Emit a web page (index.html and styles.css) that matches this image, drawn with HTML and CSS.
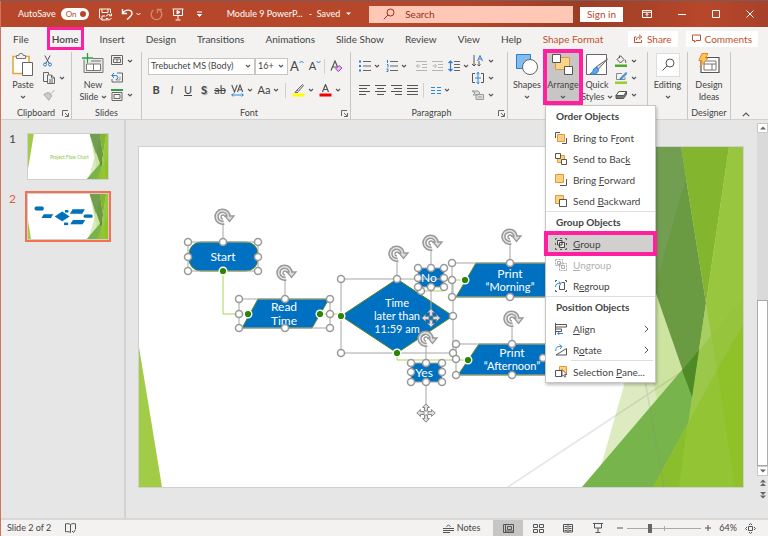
FILE: index.html
```html
<!doctype html>
<html lang="en">
<head>
    <meta charset="utf-8">
    <title>Module 9 PowerPoint</title>
    <meta name="viewport" content="width=device-width, initial-scale=1.0">
    <link rel="stylesheet" href="styles.css">
</head>
<body>

    <!-- shared symbols -->
    <svg class="sprite" aria-hidden="true">
        <symbol id="chev" viewBox="0 0 6 4"><path d="M1 1l2 2 2-2" fill="none" stroke="#555" stroke-width="1.1"/></symbol>
        <symbol id="launcher" viewBox="0 0 7 7"><path d="M.5 6V.5H6M3 3l3 3M6.500 3v3.500H3" fill="none" stroke="#666"/></symbol>
        <symbol id="art" viewBox="0 0 604 340">
            <rect width="604" height="340" fill="#fff"/>
            <path d="M456 340L553 0h51v340z" fill="#ddecc0"/>
            <path d="M466 0h138v340h-68z" fill="#cce4a0"/>
            <path d="M466 0h76l25 156-14 94z" fill="#6a9a42"/>
            <path d="M466 0h76l5 31-34 119z" fill="#729e52"/>
            <path d="M542 0h48l-23 156z" fill="#84b52f"/>
            <path d="M590 0h14v340h-64z" fill="#98c63f"/>
            <path d="M567 156l30 184h-57z" fill="#a6ce62"/>
            <path d="M443 340l117-137-20 137z" fill="#78b44c"/>
            <path d="M560 203l44-52v189h-64z" fill="#94c43c" opacity=".6"/>
            <path d="M543 223l17-20-7 47z" fill="#4e8a26"/>
            <path d="M514 340l64-117 26-45v162z" fill="#93c433"/>
            <path d="M514 340l34-60-8 60z" fill="#8bbe2c"/>
            <path d="M578 223l26-45v162h-8z" fill="#8fc129"/>
            <path d="M369 340l172-114M500 200l25 140" fill="none" stroke="#888" stroke-opacity=".22" stroke-width="1.500"/>
        </symbol>
        <symbol id="flow" viewBox="0 0 604 340">
            <g fill="none" stroke="#a9d65a">
                <path d="M84 124v43h25M181 167h21M282 144h22M305 133h21M258 206v7h71"/>
                <path d="M418 133h36v22M410 213h44v-33"/>
            </g>
            <g fill="#0070c0" stroke="#5b8a1e">
                <rect x="50" y="95" width="69" height="29" rx="12"/>
                <path d="M119 152h71l-17 29h-70z"/>
                <path d="M258 132l56 37-56 37-56-37z"/>
                <path d="M337 116h92l-20 34h-92z"/>
                <path d="M340 197h92l-20 31h-93z"/>
                <rect x="279" y="121" width="26" height="19" stroke="none"/>
                <rect x="272" y="216" width="31" height="19" stroke="none"/>
                <rect x="420" y="155" width="68" height="25" rx="12"/>
            </g>
        </symbol>
        <g id="h"><circle cx="5" cy="5" r="3.500" fill="#fff" stroke="#999" stroke-width="1.500"/></g>
        <g id="dot"><circle cx="5" cy="5" r="3.800" fill="#2a8500" stroke="#fff" stroke-width="1.400"/></g>
        <g id="rot">
            <path d="M14.500 9A6 6 0 1 0 10 14.500" fill="none" stroke="#999" stroke-width="4.500"/>
            <path d="M11 8h9l-4.500 5.500z" fill="#ddd" stroke="#999" stroke-width="1.300"/>
            <path d="M14.500 9A6 6 0 1 0 10 14.500" fill="none" stroke="#e4e4e4" stroke-width="1.500"/>
            <path d="M11 9a2 2 0 1 0-2 2" fill="none" stroke="#999" stroke-width="1.300"/>
        </g>
        <g id="move" fill="#ddd" stroke="#888">
            <path d="M10 .8l3.500 3.700h-2V8h-3V4.500h-2z"/>
            <path d="M10 19.200l3.500-3.700h-2V12h-3v3.500h-2z"/>
            <path d="M.8 10l3.700-3.500v2H8v3H4.500v2z"/>
            <path d="M19.200 10l-3.700-3.500v2H12v3h3.500v2z"/>
        </g>
    </svg>

    <div class="backdrop"></div>
    <div class="app">
        <header class="titlebar">
            <label class="autosave" for="autosave">AutoSave</label>
            <span class="toggle"><input type="checkbox" id="autosave" checked><span class="toggle-text">On</span><span class="knob"></span></span>
            <div class="quick">
                <button aria-label="Save"><svg width="13" height="13" viewBox="0 0 13 13"><path d="M6 12H3L.5 10V1h11v4M3 1v3.500h6V1M3 12V8h3M7 8.500a3 3 0 0 1 5-1M12.500 5.500v2.300h-2.300M12.300 10a3 3 0 0 1-5 1M7 12.800v-2.300h2.300"/></svg></button>
                <button aria-label="Undo"><svg width="20" height="13" viewBox="0 0 20 13"><path d="M1.500 1v4.500H6M1.500 5.500C4 1 11 1 11 5.500c0 2.500-3 4-5 6" stroke-width="1.400"/><path d="M15.500 5l2 2 2-2"/></svg></button>
                <button aria-label="Redo" class="faded"><svg width="13" height="13" viewBox="0 0 13 13"><path d="M3.500 2A5.300 5.300 0 1 0 9.500 2M7.500 5V1.500H12" stroke-width="1.400"/></svg></button>
                <button aria-label="Start slide show"><svg width="12" height="13" viewBox="0 0 12 13"><path d="M.5 1h11M1.500 1v6.500h9V1M6 7.500v4M3.500 12h5"/><path d="M5 2.500v3.500l3-1.800z" fill="#fff"/></svg></button>
                <button aria-label="Customize toolbar"><svg width="7" height="7" viewBox="0 0 7 7"><path d="M1 1h5"/><path d="M1.500 3.500h4l-2 2z" fill="#fff"/></svg></button>
            </div>
            <div class="doc"><span>Module 9 PowerP...</span><span>-&nbsp; Saved</span><svg width="5" height="4" viewBox="0 0 5 4"><path d="M0 .5h5L2.500 3z" fill="#fff"/></svg></div>
            <div class="search">
                <svg width="12" height="12" viewBox="0 0 12 12"><circle cx="7.500" cy="4.500" r="3.500" fill="none" stroke="#9b2f20"/><path d="M5 7L.8 11.200" stroke="#9b2f20"/></svg>
                <input type="search" placeholder="Search" aria-label="Search">
            </div>
            <button class="signin">Sign in</button>
            <div class="window-buttons">
                <button aria-label="Ribbon display options"><svg width="10" height="8" viewBox="0 0 10 8"><path d="M.5.500h9v7h-9zM.5 2.300h9M5 6.500V3.500M3.500 5L5 3.500 6.500 5"/></svg></button>
                <button aria-label="Minimize"><svg width="8" height="8" viewBox="0 0 8 8"><path d="M0 4.500h8"/></svg></button>
                <button aria-label="Maximize"><svg width="8" height="8" viewBox="0 0 8 8"><path d="M.5.500h7v7h-7z"/></svg></button>
                <button aria-label="Close"><svg width="8" height="8" viewBox="0 0 8 8"><path d="M.5.500l7 7M7.500.500l-7 7"/></svg></button>
            </div>
        </header>

        <nav class="tabs">
            <a href="#">File</a>
            <a href="#" class="active">Home</a>
            <a href="#">Insert</a>
            <a href="#">Design</a>
            <a href="#">Transitions</a>
            <a href="#">Animations</a>
            <a href="#">Slide Show</a>
            <a href="#">Review</a>
            <a href="#">View</a>
            <a href="#">Help</a>
            <a href="#" class="context">Shape Format</a>
            <div class="tab-actions">
                <button><svg width="9" height="9" viewBox="0 0 9 9"><path d="M2.500 3H.5v5.500h7V6M2.500 6c0-2.500 2-3 3.500-3M5 .8L7.800 3 5 5.200"/></svg>Share</button>
                <button><svg width="9" height="9" viewBox="0 0 9 9"><path d="M.5 1h8v5.500H4L2.500 8.300V6.500h-2z"/></svg>Comments</button>
            </div>
        </nav>

        <section class="ribbon">
            <div class="group clipboard">
                <div class="tools">
                    <button class="big"><svg width="22" height="24" viewBox="0 0 22 24"><path d="M1 3.500h16v17H1z" fill="#fff" stroke="#e8a33d" stroke-width="1.500"/><path d="M4.500 5.500v-3h2.300a2.200 2.200 0 0 1 4.400 0h2.300v3z" fill="#f3f2f1" stroke="#777"/><path d="M10.500 9.500h10v13h-10z" fill="#fff" stroke="#666"/></svg><span>Paste</span><svg class="c"><use href="#chev"/></svg></button>
                    <div class="stack">
                        <button aria-label="Cut"><svg width="9" height="12" viewBox="0 0 9 12"><path d="M1.800.500l4.400 8M7.200.500l-4.400 8" stroke="#555" fill="none"/><g fill="none" stroke="#2b7cd3"><circle cx="2" cy="9.500" r="1.500"/><circle cx="7" cy="9.500" r="1.500"/></g></svg></button>
                        <button aria-label="Copy"><svg width="12" height="12" viewBox="0 0 12 12"><path d="M4 9.500H.5v-9h5v2M4.500 3h4l3 3v5.500h-7zM8.500 3v3h3M6 8h4M6 10h4" fill="none" stroke="#666"/></svg><svg class="c"><use href="#chev"/></svg></button>
                        <button aria-label="Format painter"><svg width="12" height="12" viewBox="0 0 12 12"><path d="M11.500 1L8 4.500M5.500 3L9 6.500M5 3.500L.8 5.500l5 5.800L8.500 7z" fill="#ccc" stroke="#aaa"/></svg></button>
                    </div>
                </div>
                <div class="caption">Clipboard<svg class="launch"><use href="#launcher"/></svg></div>
            </div>

            <div class="group slides">
                <div class="tools">
                    <button class="big"><svg width="22" height="24" viewBox="0 0 22 24"><path d="M2 5.500h19v14H2z" fill="#e6e6e6" stroke="#777"/><path d="M4.500 11h14v6.500h-14zM11.500 11v6.500M9 8h10" fill="#fff" stroke="#777"/><path d="M5.500 0v10.500M0 5h11" stroke="#f3f2f1" stroke-width="3"/><path d="M5.500 0v10.500M0 5h11" stroke="#2f9e44" stroke-width="1.300"/></svg><span>New</span><span>Slide <svg class="c"><use href="#chev"/></svg></span></button>
                    <div class="stack">
                        <button aria-label="Layout"><svg width="12" height="11" viewBox="0 0 12 11"><path d="M.5.500h11v9H.5zM2.500 4h7v3.500h-7zM6 4v3.500M2.500 2.500h7" fill="none" stroke="#666"/></svg><svg class="c"><use href="#chev"/></svg></button>
                        <button aria-label="Reset"><svg width="12" height="11" viewBox="0 0 12 11"><path d="M6 1h5.500v9H1V7" fill="none" stroke="#666"/><path d="M5 8h4V4.500" fill="none" stroke="#999"/><path d="M.8 3.500h4a2 2 0 0 1 0 4M3 1L.8 3.500 3 6" fill="none" stroke="#2b7cd3"/></svg></button>
                        <button aria-label="Section"><svg width="12" height="12" viewBox="0 0 12 12"><path d="M0 1h12" stroke="#2f9e44" stroke-width="2"/><path d="M1 3.500h10v8H1zM3 5.500h6v4H3z" fill="none" stroke="#666"/></svg><svg class="c"><use href="#chev"/></svg></button>
                    </div>
                </div>
                <div class="caption">Slides</div>
            </div>

            <div class="group font">
                <div class="rows">
                    <div class="row">
                        <label class="combo name"><select aria-label="Font"><option>Trebuchet MS (Body)</option></select><svg class="c"><use href="#chev"/></svg></label>
                        <label class="combo size"><select aria-label="Font size"><option>16+</option></select><svg class="c"><use href="#chev"/></svg></label>
                        <button class="mid" aria-label="Increase font size"><span class="glyph">A</span><svg class="sup" width="5" height="4" viewBox="0 0 5 4"><path d="M.5 3l2-2 2 2"/></svg></button>
                        <button class="mid" aria-label="Decrease font size"><span class="glyph less">A</span><svg class="sup" width="5" height="4" viewBox="0 0 5 4"><path d="M.5 1l2 2 2-2"/></svg></button>
                        <i class="sep"></i>
                        <button class="mid clear" aria-label="Clear formatting"><svg width="13" height="12" viewBox="0 0 13 12"><path d="M1 10.500L5 1l3 7M2.500 7H7" fill="none" stroke="#555" stroke-width="1.200"/><path d="M5.500 9L9 5.500l3 2.500-3.500 3.500z" fill="#e3b8ee" stroke="#a347ba"/></svg></button>
                    </div>
                    <div class="row">
                        <button><b>B</b></button>
                        <button><em>I</em></button>
                        <button><u>U</u></button>
                        <button class="shadow"><b>S</b></button>
                        <button><s>ab</s></button>
                        <button class="dd" aria-label="Character spacing"><svg width="13" height="13" viewBox="0 0 13 13"><path d="M.8 1l2.700 7L6.200 1M6.500 8L9 1l2.700 7M7.300 5.800h3.500" fill="none" stroke="#555" stroke-width="1.100"/><path d="M.5 11h12M2.500 9.300L.8 11l1.700 1.700M10.500 9.300l1.700 1.700-1.700 1.700" fill="none" stroke="#2b88d8"/></svg><svg class="c"><use href="#chev"/></svg></button>
                        <button class="dd">Aa<svg class="c"><use href="#chev"/></svg></button>
                        <i class="sep"></i>
                        <button class="dd" aria-label="Highlight colour"><svg width="13" height="13" viewBox="0 0 13 13"><path d="M10.500.500L5 6l1.500 1.500 5-6zM5 6L3 8.500h3" fill="#ddd" stroke="#666"/><path d="M.5 9.500h12v3H.5z" fill="#ffff00"/></svg><svg class="c"><use href="#chev"/></svg></button>
                        <button class="dd" aria-label="Font colour"><svg width="13" height="13" viewBox="0 0 13 13"><path d="M3.500 8l3-7.500 3 7.500M4.500 5.500h4" fill="none" stroke="#555" stroke-width="1.200"/><path d="M.5 9.500h12v3H.5z" fill="#f00000"/></svg><svg class="c"><use href="#chev"/></svg></button>
                    </div>
                </div>
                <div class="caption">Font<svg class="launch"><use href="#launcher"/></svg></div>
            </div>

            <div class="group paragraph">
                <div class="tools">
                    <div class="rows">
                        <div class="row">
                            <button class="dd" aria-label="Bullets"><svg width="12" height="12" viewBox="0 0 12 12"><path d="M0 1.500h2M0 6h2M0 10.500h2" stroke="#2b7cd3" stroke-width="2"/><path d="M4 1.500h8M4 6h8M4 10.500h8" stroke="#666"/></svg><svg class="c"><use href="#chev"/></svg></button>
                            <button class="dd" aria-label="Numbering"><svg width="12" height="12" viewBox="0 0 12 12"><path d="M1.500 0v3M1 4.500h1v3M.5 9h1.500v2.500H.5" stroke="#2b7cd3" fill="none"/><path d="M4 1.500h8M4 6h8M4 10.500h8" stroke="#666"/></svg><svg class="c"><use href="#chev"/></svg></button>
                            <i class="space"></i>
                            <button aria-label="Decrease indent"><svg width="11" height="10" viewBox="0 0 11 10"><path d="M0 .500h11M6 3.500h5M6 6.500h5M0 9.500h11M.5 5h4M2.500 3l-2 2 2 2" fill="none" stroke="#b5b5b5"/></svg></button>
                            <button aria-label="Increase indent"><svg width="11" height="10" viewBox="0 0 11 10"><path d="M0 .500h11M6 3.500h5M6 6.500h5M0 9.500h11M.5 5h4M2.500 3l2 2-2 2" fill="none" stroke="#b5b5b5"/></svg></button>
                            <button class="dd" aria-label="Line spacing"><svg width="12" height="12" viewBox="0 0 12 12"><path d="M2.500 1v10M.5 3l2-2 2 2M.5 9l2 2 2-2" stroke="#2b7cd3" fill="none" stroke-width="1.200"/><path d="M6 1.500h6M6 4.500h6M6 7.500h6M6 10.500h6" stroke="#666"/></svg><svg class="c"><use href="#chev"/></svg></button>
                        </div>
                        <div class="row">
                            <button aria-label="Align left"><svg width="11" height="10" viewBox="0 0 11 10"><path d="M0 .500h11M0 3.500h8M0 6.500h11M0 9.500h7" stroke="#555"/></svg></button>
                            <button aria-label="Center"><svg width="11" height="10" viewBox="0 0 11 10"><path d="M0 .500h11M2 3.500h7M0 6.500h11M2 9.500h7" stroke="#555"/></svg></button>
                            <button aria-label="Align right"><svg width="11" height="10" viewBox="0 0 11 10"><path d="M0 .500h11M3 3.500h8M0 6.500h11M4 9.500h7" stroke="#555"/></svg></button>
                            <button aria-label="Justify"><svg width="11" height="10" viewBox="0 0 11 10"><path d="M0 .500h11M0 3.500h11M0 6.500h11M0 9.500h11" stroke="#555"/></svg></button>
                            <i class="sep"></i>
                            <button class="dd" aria-label="Columns"><svg width="10" height="7" viewBox="0 0 10 7"><path d="M0 .500h4M0 3.500h4M0 6.500h4M6 .500h4M6 3.500h4M6 6.500h4" stroke="#2b88d8"/></svg><svg class="c"><use href="#chev"/></svg></button>
                        </div>
                    </div>
                    <div class="stack">
                        <button aria-label="Text direction"><svg width="12" height="12" viewBox="0 0 12 12"><path d="M2 0v11M0 9l2 2 2-2M7 6v5M5.500 9.500L7 11l1.500-1.500" fill="none" stroke="#555"/><path d="M5.500 6l2.500-5.500L10.500 6M6.500 4h3" fill="none" stroke="#2b7cd3"/></svg><svg class="c"><use href="#chev"/></svg></button>
                        <button aria-label="Align text"><svg width="12" height="12" viewBox="0 0 12 12"><path d="M3 1.500H.5v9H3M9 1.500h2.500v9H9" fill="none" stroke="#555"/><path d="M6 0v12M4.500 1.800L6 .5l1.500 1.300M4.500 10.200L6 11.500l1.500-1.300M3 6h6" fill="none" stroke="#2b88d8"/></svg><svg class="c"><use href="#chev"/></svg></button>
                        <button aria-label="Convert to SmartArt"><svg width="12" height="12" viewBox="0 0 12 12"><path d="M0 2h6l2 2-2 2H1l2-2zM4 5.500h7.500v5H4zM6 8h4" fill="#ddd" stroke="#999"/></svg><svg class="c"><use href="#chev"/></svg></button>
                    </div>
                </div>
                <div class="caption">Paragraph<svg class="launch"><use href="#launcher"/></svg></div>
            </div>

            <div class="group drawing">
                <div class="tools">
                    <button class="big"><svg width="22" height="24" viewBox="0 0 22 24"><path d="M.5 1.500h14v14H.5z" fill="#83bdf0" stroke="#2b7cd3"/><circle cx="14" cy="14" r="7.500" fill="#fff" stroke="#666"/></svg><span>Shapes</span><svg class="c"><use href="#chev"/></svg></button>
                    <div class="arrange">
                        <button class="big" aria-expanded="true"><svg width="22" height="24" viewBox="0 0 22 24"><path d="M3.500 4.500h14v12h-14z" fill="#f8d58a" stroke="#e8943a"/><path d="M.5 1.500h8v8h-8zM12.500 13.500h8v8h-8z" fill="#fff" stroke="#555"/></svg><span>Arrange</span><svg class="c"><use href="#chev"/></svg></button>
                        <div class="menu" role="menu">
                            <h3>Order Objects</h3>
                            <button role="menuitem"><svg width="12" height="12" viewBox="0 0 12 12"><path d="M.5 6V.5H5M11.500 6v5.500H7" fill="none" stroke="#555"/><path d="M2.500 2.500h7v7h-7z" fill="#fbd37c" stroke="#e8943a"/></svg><span>Bring to F<u>r</u>ont</span></button>
                            <button role="menuitem"><svg width="12" height="12" viewBox="0 0 12 12"><path d="M2.500 2.500h7v7h-7z" fill="#fbd37c" stroke="#e8943a"/><path d="M.5.500h5v5h-5zM6.500 6.500h5v5h-5z" fill="#fff" stroke="#555"/></svg><span>Send to Bac<u>k</u></span></button>
                            <button role="menuitem"><svg width="12" height="12" viewBox="0 0 12 12"><path d="M11.500 5v6.500H5" fill="none" stroke="#555"/><path d="M.5.500h8v8h-8z" fill="#fbd37c" stroke="#e8943a"/></svg><span>Bring <u>F</u>orward</span></button>
                            <button role="menuitem"><svg width="12" height="12" viewBox="0 0 12 12"><path d="M.5.500h8v8h-8z" fill="#fbd37c" stroke="#e8943a"/><path d="M4.500 4.500h7v7h-7z" fill="#fff" stroke="#555"/></svg><span>Send <u>B</u>ackward</span></button>
                            <h3 class="line">Group Objects</h3>
                            <button role="menuitem" class="hot"><svg width="12" height="12" viewBox="0 0 12 12"><path d="M.5 2V.5H2M10 .500h1.500V2M11.500 10v1.500H10M2 11.500H.5V10M5 .500h2M5 11.500h2M.5 5v2M11.500 5v2" fill="none" stroke="#555"/><path d="M2.500 2.500h4.500v4.500h-4.500zM4.500 4.500h5v5h-5z" fill="#fff" fill-opacity=".6" stroke="#444"/></svg><span><u>G</u>roup</span></button>
                            <button role="menuitem" disabled><svg width="12" height="12" viewBox="0 0 12 12"><path d="M.5.500h7v6h-7zM4.500 4.500h7v7h-7z" fill="none" stroke="#aaa" stroke-dasharray="2 1"/><path d="M2.500 2.500h3v3h-3zM6.500 6.500h3v3h-3z" fill="none" stroke="#aaa"/></svg><span><u>U</u>ngroup</span></button>
                            <button role="menuitem"><svg width="12" height="12" viewBox="0 0 12 12"><path d="M.5 2V.5H2M10 .500h1.500V2M11.500 10v1.500H10M2 11.500H.5V10" fill="none" stroke="#555"/><path d="M6.500 2.500h3v7h-5V6" fill="none" stroke="#555"/><path d="M.5 7c0-3 2-4 5-3.500M3.500 1.500L6 3.600 4 6" fill="none" stroke="#2b88d8"/></svg><span>R<u>e</u>group</span></button>
                            <h3 class="line">Position Objects</h3>
                            <button role="menuitem"><svg width="12" height="12" viewBox="0 0 12 12"><path d="M.5 0v12M.5 1.500h11v2.500H.5M.5 6h6v2.500h-6" fill="none" stroke="#555"/><path d="M2.500 10.500H8M4.500 9L2.800 10.500 4.500 12" fill="none" stroke="#2b88d8"/></svg><span><u>A</u>lign</span><svg class="more" width="5" height="8" viewBox="0 0 5 8"><path d="M.8.800L4 4 .8 7.200"/></svg></button>
                            <button role="menuitem"><svg width="12" height="12" viewBox="0 0 12 12"><path d="M11.500 4.500v6.500H1z" fill="none" stroke="#555"/><path d="M.8 7C.5 3 3 2 6 2.500M4.500.500L7 2.600 5 5" fill="none" stroke="#2b88d8"/></svg><span>R<u>o</u>tate</span><svg class="more" width="5" height="8" viewBox="0 0 5 8"><path d="M.8.800L4 4 .8 7.200"/></svg></button>
                            <hr>
                            <button role="menuitem"><svg width="12" height="12" viewBox="0 0 12 12"><path d="M4.500.500h7v7h-7z" fill="#fbd37c" stroke="#e8943a"/><path d="M.5 4.500h6v6h-6z" fill="#fff" stroke="#555"/><path d="M7 3.500v7l1.600-1.600 1.200 2.300 1-.6-1.100-2.100H12z" fill="#fff" stroke="#444" stroke-width=".8"/></svg><span>Selection <u>P</u>ane...</span></button>
                        </div>
                    </div>
                    <button class="big styles"><svg width="22" height="24" viewBox="0 0 22 24"><path d="M.5 1.500h20v20H.5z" fill="#fff" stroke="#666"/><path d="M21.500 6l-9 10-2.500-2z" fill="#ddd" stroke="#666"/><path d="M11 14.500c-3 0-4 2-4 4L4 21c4 .800 8 0 8.500-4z" fill="#5aa9e6" stroke="#2b7cd3"/></svg><span>Quick</span><span>Styles <svg class="c"><use href="#chev"/></svg></span></button>
                    <div class="stack">
                        <button aria-label="Shape fill"><svg width="12" height="12" viewBox="0 0 12 12"><path d="M5.500.800L9 4.500 5.500 8 2 4.500zM4.500 3V.500M10 5c1 1.500 1 2.500.3 3" fill="none" stroke="#555"/><path d="M0 9.500h12V12H0z" fill="#4ea72e"/></svg><svg class="c"><use href="#chev"/></svg></button>
                        <button aria-label="Shape outline"><svg width="12" height="12" viewBox="0 0 12 12"><path d="M7 1.500H1.500v6H10V5" fill="none" stroke="#888"/><path d="M11 .500L5.500 6 5 7.500l1.500-.5L12 1.500z" fill="#5aa9e6" stroke="#2b7cd3"/><path d="M0 9.500h12V12H0z" fill="#9acd32"/></svg><svg class="c"><use href="#chev"/></svg></button>
                        <button aria-label="Shape effects"><svg width="12" height="12" viewBox="0 0 12 12"><path d="M4 2.500h7.500v3l-3 4H1v-3z" fill="#777" stroke="#555"/><path d="M4 2.500h7.500l-3 4H1z" fill="#fff" stroke="#555"/></svg><svg class="c"><use href="#chev"/></svg></button>
                    </div>
                </div>
            </div>

            <div class="group editing">
                <div class="tools">
                    <button class="big"><svg class="tile" width="22" height="22" viewBox="0 0 22 22"><circle cx="13" cy="9" r="4" fill="none" stroke="#555"/><path d="M10 12l-4.500 4.500" stroke="#555"/></svg><span>Editing</span><svg class="c"><use href="#chev"/></svg></button>
                </div>
            </div>

            <div class="group designer">
                <div class="tools">
                    <button class="big"><svg width="22" height="24" viewBox="0 0 22 24"><path d="M3 4.500h18v15H3z" fill="#fff" stroke="#555" stroke-width="1.200"/><path d="M6 8h12v9H6zM6 11h12M14 11v6" fill="none" stroke="#777"/><path d="M4 .500h6L7.500 5H10L2 14l2-6.500H.8z" fill="#fbc55a" stroke="#e8852a"/></svg><span>Design</span><span>Ideas</span></button>
                </div>
                <div class="caption">Designer</div>
            </div>
            <button class="collapse" aria-label="Collapse ribbon"><svg width="8" height="5" viewBox="0 0 8 5"><path d="M.8 4.200L4 1l3.200 3.200" fill="none" stroke="#555" stroke-width="1.200"/></svg></button>
        </section>

        <main class="workspace">
            <aside class="thumbs">
                <figure>
                    <figcaption>1</figcaption>
                    <svg class="thumb" viewBox="0 0 604 340"><use href="#art"/><path d="M0 0h44L0 265z" fill="#a2cc46"/><text class="deck-title" x="312" y="188">Project Flow Chart</text></svg>
                </figure>
                <figure class="selected">
                    <figcaption>2</figcaption>
                    <svg class="thumb" viewBox="0 0 604 340"><use href="#art"/><path d="M0 200l23 140H0z" fill="#a2cc46"/><use href="#flow"/></svg>
                </figure>
            </aside>

            <div class="editor">
                <svg class="slide" viewBox="0 0 604 340" role="img" aria-label="Flow chart slide">
                    <use href="#art"/>
                    <path d="M0 200l23 140H0z" fill="#a2cc46"/>
                    <use href="#flow"/>

                    <!-- selection frames and stems -->
                    <g fill="none" stroke="#a6a6a6">
                        <path d="M49 95h70v29H49zM84 95V77"/>
                        <path d="M100 152h91v29h-91zM146 152v-18"/>
                        <path d="M202 132h112v74H202zM258 132v-18"/>
                        <path d="M279 121h26v19h-26zM292 121v-18M292 140v24"/>
                        <path d="M313 116h116v34H313zM371 116V98"/>
                        <path d="M317 197h112v31H317zM373 197v-18"/>
                        <path d="M272 216h31v19h-31zM287 216v-17M287 235v24"/>
                    </g>

                    <g class="shape-text">
                        <text x="84" y="114">Start</text>
                        <text x="145" y="164">Read</text>
                        <text x="145" y="178">Time</text>
                        <text x="371" y="131">Print</text>
                        <text x="373" y="210">Print</text>
                        <text x="290" y="135">No</text>
                        <text x="285" y="230">Yes</text>
                    </g>
                    <g class="shape-text small">
                        <text x="258" y="160">Time</text>
                        <text x="258" y="173">later than</text>
                        <text x="258" y="186">11:59 am</text>
                        <text x="371" y="144">“Morning”</text>
                        <text x="373" y="223">“Afternoon”</text>
                    </g>

                    <!-- resize handles -->
                    <g>
                        <use href="#h" x="44" y="90"/><use href="#h" x="79" y="90"/><use href="#h" x="114" y="90"/>
                        <use href="#h" x="44" y="105"/><use href="#h" x="114" y="105"/>
                        <use href="#h" x="44" y="119"/><use href="#h" x="114" y="119"/>
                        <use href="#h" x="95" y="147"/><use href="#h" x="141" y="147"/><use href="#h" x="186" y="147"/>
                        <use href="#h" x="95" y="162"/><use href="#h" x="186" y="162"/>
                        <use href="#h" x="95" y="176"/><use href="#h" x="141" y="176"/><use href="#h" x="186" y="176"/>
                        <use href="#h" x="197" y="127"/><use href="#h" x="253" y="127"/><use href="#h" x="309" y="164"/>
                        <use href="#h" x="197" y="201"/><use href="#h" x="309" y="201"/>
                        <use href="#h" x="277" y="139"/>
                        <use href="#h" x="274" y="116"/><use href="#h" x="287" y="116"/><use href="#h" x="300" y="116"/>
                        <use href="#h" x="274" y="126"/><use href="#h" x="300" y="126"/>
                        <use href="#h" x="274" y="135"/><use href="#h" x="287" y="135"/><use href="#h" x="300" y="135"/>
                        <use href="#h" x="308" y="111"/><use href="#h" x="366" y="111"/>
                        <use href="#h" x="308" y="128"/><use href="#h" x="308" y="145"/><use href="#h" x="366" y="145"/>
                        <use href="#h" x="312" y="192"/><use href="#h" x="368" y="192"/>
                        <use href="#h" x="312" y="207"/><use href="#h" x="312" y="223"/><use href="#h" x="368" y="223"/>
                        <use href="#h" x="399" y="206"/>
                        <use href="#h" x="267" y="211"/><use href="#h" x="282" y="211"/><use href="#h" x="298" y="211"/>
                        <use href="#h" x="267" y="220"/><use href="#h" x="298" y="220"/>
                        <use href="#h" x="267" y="230"/><use href="#h" x="282" y="230"/><use href="#h" x="298" y="230"/>
                    </g>
                    <!-- connection points -->
                    <g>
                        <use href="#dot" x="79" y="119"/><use href="#dot" x="104" y="162"/><use href="#dot" x="176" y="162"/>
                        <use href="#dot" x="197" y="164"/><use href="#dot" x="253" y="201"/>
                        <use href="#dot" x="321" y="128"/><use href="#dot" x="324" y="208"/>
                    </g>
                    <g>
                        <use href="#rot" x="75" y="61"/><use href="#rot" x="137" y="117"/><use href="#rot" x="249" y="98"/>
                        <use href="#rot" x="283" y="87"/><use href="#rot" x="362" y="81"/><use href="#rot" x="364" y="163"/>
                        <use href="#rot" x="278" y="183"/>
                    </g>
                    <g>
                        <use href="#move" x="282" y="161"/><use href="#move" x="277" y="256"/>
                    </g>
                </svg>
            </div>

            <div class="scrollbar">
                <button aria-label="Scroll up"><svg width="6" height="4" viewBox="0 0 6 4"><path d="M0 3.500h6L3 .500z"/></svg></button>
                <div class="track"><div class="grip"></div></div>
                <button aria-label="Scroll down"><svg width="6" height="4" viewBox="0 0 6 4"><path d="M0 .500h6L3 3.500z"/></svg></button>
                <button class="bare" aria-label="Previous slide"><svg width="6" height="7" viewBox="0 0 6 7"><path d="M0 3.500h6L3 .500zM0 7h6L3 4z"/></svg></button>
                <button class="bare" aria-label="Next slide"><svg width="6" height="7" viewBox="0 0 6 7"><path d="M0 0h6L3 3zM0 3.500h6L3 6.500z"/></svg></button>
            </div>
        </main>

        <footer class="status">
            <span>Slide 2 of 2</span>
            <svg class="book" width="11" height="10" viewBox="0 0 11 10"><path d="M5.500 1.500C4 .500 2 .500.5.800v8c1.500-.3 3.500-.3 5 .7V1.500C7 .500 9 .500 10.500.800V6M7 8l1.500 1.500L10.500 6.500"/></svg>
            <button class="notes"><svg width="11" height="9" viewBox="0 0 11 9"><path d="M0 4.500h11M0 6.500h11M0 8.500h7M3.500 2.800l2-2 2 2"/></svg>Notes</button>
            <div class="views">
                <button class="on" aria-label="Normal"><svg width="11" height="9" viewBox="0 0 11 9"><path d="M.5.500h10v8H.5zM2.500.500v8M4.500 2.500h4v3h-4zM2.500 7h8"/></svg></button>
                <button aria-label="Slide sorter"><svg width="11" height="9" viewBox="0 0 11 9"><path d="M.5.500h4v3h-4zM6.500.500h4v3h-4zM.5 5.500h4v3h-4zM6.500 5.500h4v3h-4z"/></svg></button>
                <button aria-label="Reading view"><svg width="10" height="9" viewBox="0 0 10 9"><path d="M.5.500h9v7.500h-9zM5 .500v8.500M1.500 2.500h2.500M1.500 4.500h2.500M1.500 6.500h2.500M6 2.500h2.500M6 4.500h2.500M6 6.500h2.500"/></svg></button>
                <button aria-label="Slide show"><svg width="10" height="10" viewBox="0 0 10 10"><path d="M0 .500h10M1.500.500v4.500h7V.500M5 5v4M2.500 9.500h5"/></svg></button>
            </div>
            <div class="zoom">
                <button aria-label="Zoom out"><svg width="6" height="6" viewBox="0 0 6 6"><path d="M0 3h6"/></svg></button>
                <input type="range" min="0" max="100" value="30" aria-label="Zoom">
                <button aria-label="Zoom in"><svg width="6" height="6" viewBox="0 0 6 6"><path d="M0 3h6M3 0v6"/></svg></button>
                <span>64%</span>
                <button aria-label="Fit slide"><svg width="11" height="11" viewBox="0 0 11 11"><path d="M3.500 3.500h4v4h-4zM4 2l1.500-1.500L7 2M4 9l1.500 1.500L7 9M2 4L.5 5.500 2 7M9 4l1.500 1.500L9 7"/></svg></button>
            </div>
        </footer>
    </div>

</body>
</html>
```
FILE: styles.css
```css
* {
    box-sizing: border-box;
}
body {
    margin: 0;
    height: 100vh;
    display: flex;
    flex-direction: column;
    font-family: "Segoe UI", Lato, "Open Sans", sans-serif;
    font-size: 10px;
    line-height: 12px;
    color: #444;
    background: #e6e6e6;
    overflow: hidden;
}
button, input, select {
    font: inherit;
    color: inherit;
}
button {
    display: inline-flex;
    align-items: center;
    justify-content: center;
    padding: 0;
    border: none;
    background: none;
    cursor: pointer;
    white-space: nowrap;
}
svg {
    flex: none;
}
.sprite {
    display: none;
}
.c {
    width: 6px;
    height: 4px;
}
.backdrop {
    height: 1px;
    background: #7b5b5b;
}
.app {
    flex: 1;
    min-height: 0;
    display: flex;
    flex-direction: column;
    border-left: 1px solid #d0735c;
}

/* title bar */
.titlebar {
    display: flex;
    align-items: center;
    height: 26px;
    padding: 0 14px 0 17px;
    color: #fff;
    background: linear-gradient(90deg, #b7472a 60%, #9c3d26 75%, #b7472a 92%, #a8412a);
}
.titlebar button svg {
    fill: none;
    stroke: #fff;
}
.autosave {
    font-size: 9px;
}
.toggle {
    position: relative;
    display: flex;
    align-items: center;
    justify-content: space-between;
    width: 28px;
    height: 12px;
    margin-left: 5px;
    padding: 0 3px 0 5px;
    border-radius: 6px;
    background: #fff;
    color: #b7472a;
    font-size: 8px;
}
.toggle input {
    position: absolute;
    inset: 0;
    margin: 0;
    opacity: 0;
}
.knob {
    width: 6px;
    height: 6px;
    border-radius: 50%;
    background: #b7472a;
}
.quick {
    display: flex;
    align-items: center;
    gap: 9px;
    margin-left: 10px;
}
.quick button:last-child {
    margin-left: 3px;
}
.faded {
    opacity: .35;
}
.doc {
    display: flex;
    align-items: center;
    gap: 6px;
    margin-left: 24px;
    font-size: 9px;
}
.search {
    flex: 1;
    display: flex;
    align-items: center;
    gap: 10px;
    height: 17px;
    margin-left: 18px;
    padding: 0 14px;
    background: #ffc7b5;
}
.search input {
    flex: 1;
    min-width: 0;
    padding: 0;
    border: none;
    outline: none;
    background: none;
    color: #9b2f20;
}
.search input::placeholder {
    color: #9b2f20;
}
.signin {
    width: 43px;
    height: 15px;
    margin-left: 7px;
    background: #fff;
    color: #b7472a;
}
.window-buttons {
    display: flex;
    gap: 26px;
    margin-left: 19px;
}

/* tabs */
.tabs {
    display: flex;
    align-items: center;
    gap: 21px;
    height: 23px;
    padding: 0 10px 0 12px;
    background: #f3f2f1;
}
.tabs a {
    color: #444;
    text-decoration: none;
    white-space: nowrap;
}
.tabs .active {
    align-self: stretch;
    margin: 0 -5px 0 -3px;
    padding: 3px 2px 0;
    border: 3px solid #ff1fa0;
    font-weight: 600;
}
.tabs .context, .tab-actions {
    color: #c1502e;
}
.tab-actions {
    display: flex;
    gap: 8px;
    margin-left: auto;
}
.tab-actions button {
    gap: 4px;
    height: 16px;
    padding: 0 6px;
    background: #fff;
}
.tab-actions svg {
    fill: none;
    stroke: #c1502e;
}

/* ribbon */
.ribbon {
    position: relative;
    z-index: 2;
    display: flex;
    height: 70px;
    background: #f3f2f1;
    border-bottom: 1px solid #d2d0ce;
}
.group {
    position: relative;
    flex: none;
    display: flex;
    flex-direction: column;
    justify-content: space-between;
    margin-top: 2px;
    border-right: 1px solid #c8c6c4;
}
.tools {
    display: flex;
}
.clipboard {
    width: 71px;
}
.slides {
    width: 70px;
}
.font {
    width: 209px;
    padding-left: 6px;
}
.paragraph {
    width: 157px;
    padding-left: 5px;
}
.drawing {
    width: 140px;
    padding-left: 1px;
}
.editing {
    width: 40px;
}
.designer {
    width: 43px;
}
.editing .tools, .designer .tools {
    justify-content: center;
}
.big {
    flex-direction: column;
    justify-content: flex-start;
    width: 36px;
    height: 53px;
    padding-top: 1px;
    font-size: 9px;
}
.big > svg:first-child {
    margin-bottom: 2px;
}
.big .c {
    margin-top: 4px;
}
.big span .c {
    margin: 0 0 1px;
}
.slides .big {
    margin-left: 3px;
}
.clipboard .big {
    margin-left: 4px;
}
.big > .tile:first-child {
    margin: 1px 0 3px;
    background: #fff;
    outline: 1px solid #ddd;
}
.big.styles {
    width: 32px;
}
.stack {
    display: flex;
    flex-direction: column;
}
.clipboard .stack, .drawing .stack {
    margin-left: 2px;
}
.stack button {
    justify-content: flex-start;
    gap: 4px;
    height: 17px;
}
.rows {
    display: flex;
    flex-direction: column;
    gap: 8px;
    padding-top: 6px;
}
.row {
    display: flex;
    align-items: center;
    height: 16px;
    font-size: 11px;
}
.row button {
    width: 16px;
    height: 16px;
}
.row .mid {
    width: 18px;
    align-items: flex-start;
}
.row .clear {
    width: 23px;
    align-items: center;
}
.row .dd {
    width: 27px;
    gap: 3px;
}
.sup {
    fill: none;
    stroke: #2b7cd3;
    margin-top: 2px;
}
.glyph {
    font-size: 13px;
    line-height: 16px;
}
.less {
    font-size: 11px;
}
.shadow {
    text-shadow: 1px 1px 1px #999;
}
.sep {
    width: 1px;
    height: 15px;
    background: #d2d0ce;
}
.row .dd + .sep, .row button:not(.mid) + .sep {
    margin: 0 3px;
}
.space {
    width: 3px;
}
.combo {
    display: flex;
    align-items: center;
    height: 17px;
    padding-right: 3px;
    border: 1px solid #c8c6c4;
    background: #fff;
}
.combo select {
    flex: 1;
    min-width: 0;
    padding: 0 0 0 2px;
    border: none;
    appearance: none;
    background: none;
    font-size: 9px;
}
.name {
    width: 107px;
}
.size {
    width: 33px;
}
.caption {
    display: flex;
    justify-content: center;
    align-items: center;
    font-size: 9px;
    line-height: 12px;
}
.launch {
    position: absolute;
    right: 2px;
    bottom: 2px;
    width: 7px;
    height: 7px;
}
.collapse {
    align-self: flex-end;
    margin-left: 11px;
    padding-bottom: 2px;
}

/* arrange drop-down */
.arrange {
    position: relative;
    width: 36px;
    padding: 0 1px;
}
.arrange > .big {
    width: 34px;
    height: 50px;
    background: #c8c6c4;
    outline: 4px solid #ff1fa0;
    outline-offset: -1px;
}
.menu {
    position: absolute;
    top: 53px;
    left: 0;
    width: 111px;
    border: 1px solid #c8c6c4;
    background: #fff;
    box-shadow: 1px 2px 3px rgba(0, 0, 0, .25);
}
.menu h3 {
    margin: 0;
    padding-left: 10px;
    font-size: 10px;
    font-weight: 700;
    line-height: 21px;
}
.menu .line {
    border-top: 1px solid #e1dfdd;
}
.menu button {
    display: flex;
    justify-content: flex-start;
    gap: 6px;
    width: 100%;
    height: 21px;
    padding: 0 6px 0 9px;
}
.menu button:disabled {
    color: #b1b1b1;
}
.menu .hot {
    background: #d2d0ce;
    outline: 4px solid #ff1fa0;
    outline-offset: -2px;
}
.menu hr {
    margin: 0 2px 0 25px;
    border: none;
    border-top: 1px solid #e1dfdd;
}
.more {
    margin-left: auto;
    fill: none;
    stroke: #555;
}

/* workspace */
.workspace {
    flex: 1;
    min-height: 0;
    display: flex;
    border-bottom: 2px solid #d8d8d8;
}
.thumbs {
    width: 125px;
    padding: 13px 15px 0 8px;
    border-right: 2px solid #d2d2d2;
}
.thumbs figure {
    display: flex;
    gap: 11px;
    margin: 0 0 13px;
    font-size: 12px;
}
.thumbs figcaption {
    width: 7px;
}
.thumb {
    flex: 1;
    min-width: 0;
    border: 1px solid #cfcfcf;
    background: #fff;
}
.selected {
    color: #e8593b;
}
.selected .thumb {
    outline: 2px solid #f4724f;
}
.deck-title {
    font-size: 36px;
    fill: #8cc63f;
    text-anchor: middle;
}
.editor {
    flex: 1;
    min-width: 0;
    padding: 26px 13px 0 12px;
}
.slide {
    display: block;
    width: 100%;
    border: 1px solid #d0d0d0;
    background: #fff;
}
.shape-text {
    font-family: "Trebuchet MS", Lato, sans-serif;
    font-size: 12px;
    fill: #fff;
    text-anchor: middle;
}
.small {
    font-size: 11px;
}
.scrollbar {
    display: flex;
    flex-direction: column;
    width: 11px;
    padding-top: 3px;
}
.scrollbar button {
    width: 11px;
    height: 10px;
    border: 1px solid #c8c8c8;
    background: #fff;
}
.scrollbar svg {
    fill: #666;
}
.scrollbar .bare {
    height: 13px;
    border: none;
    background: none;
}
.scrollbar .bare:last-child {
    margin-bottom: 16px;
}
.track {
    flex: 1;
    display: flex;
    align-items: flex-end;
    background: #dadada;
}
.grip {
    width: 100%;
    height: 50%;
    border: 1px solid #ababab;
    background: #fff;
}

/* status bar */
.status {
    display: flex;
    align-items: center;
    height: 16px;
    padding: 0 12px 0 6px;
    background: #f3f2f1;
    font-size: 9px;
}
.status svg {
    fill: none;
    stroke: #555;
}
.book {
    margin-left: 14px;
}
.notes {
    gap: 3px;
    margin-left: auto;
}
.views {
    display: flex;
    margin-left: 13px;
}
.views button {
    width: 30px;
    height: 16px;
}
.views .on {
    background: #c8c6c4;
}
.zoom {
    display: flex;
    align-items: center;
    margin-left: 4px;
}
.zoom span {
    margin: 0 8px;
}
.zoom input {
    appearance: none;
    width: 74px;
    height: 12px;
    margin: 0 4px;
    background: linear-gradient(#aaa, #aaa) center / 100% 1px no-repeat, linear-gradient(#aaa, #aaa) center / 1px 5px no-repeat;
}
.zoom input::-webkit-slider-thumb {
    appearance: none;
    width: 4px;
    height: 9px;
    background: #666;
}
```
